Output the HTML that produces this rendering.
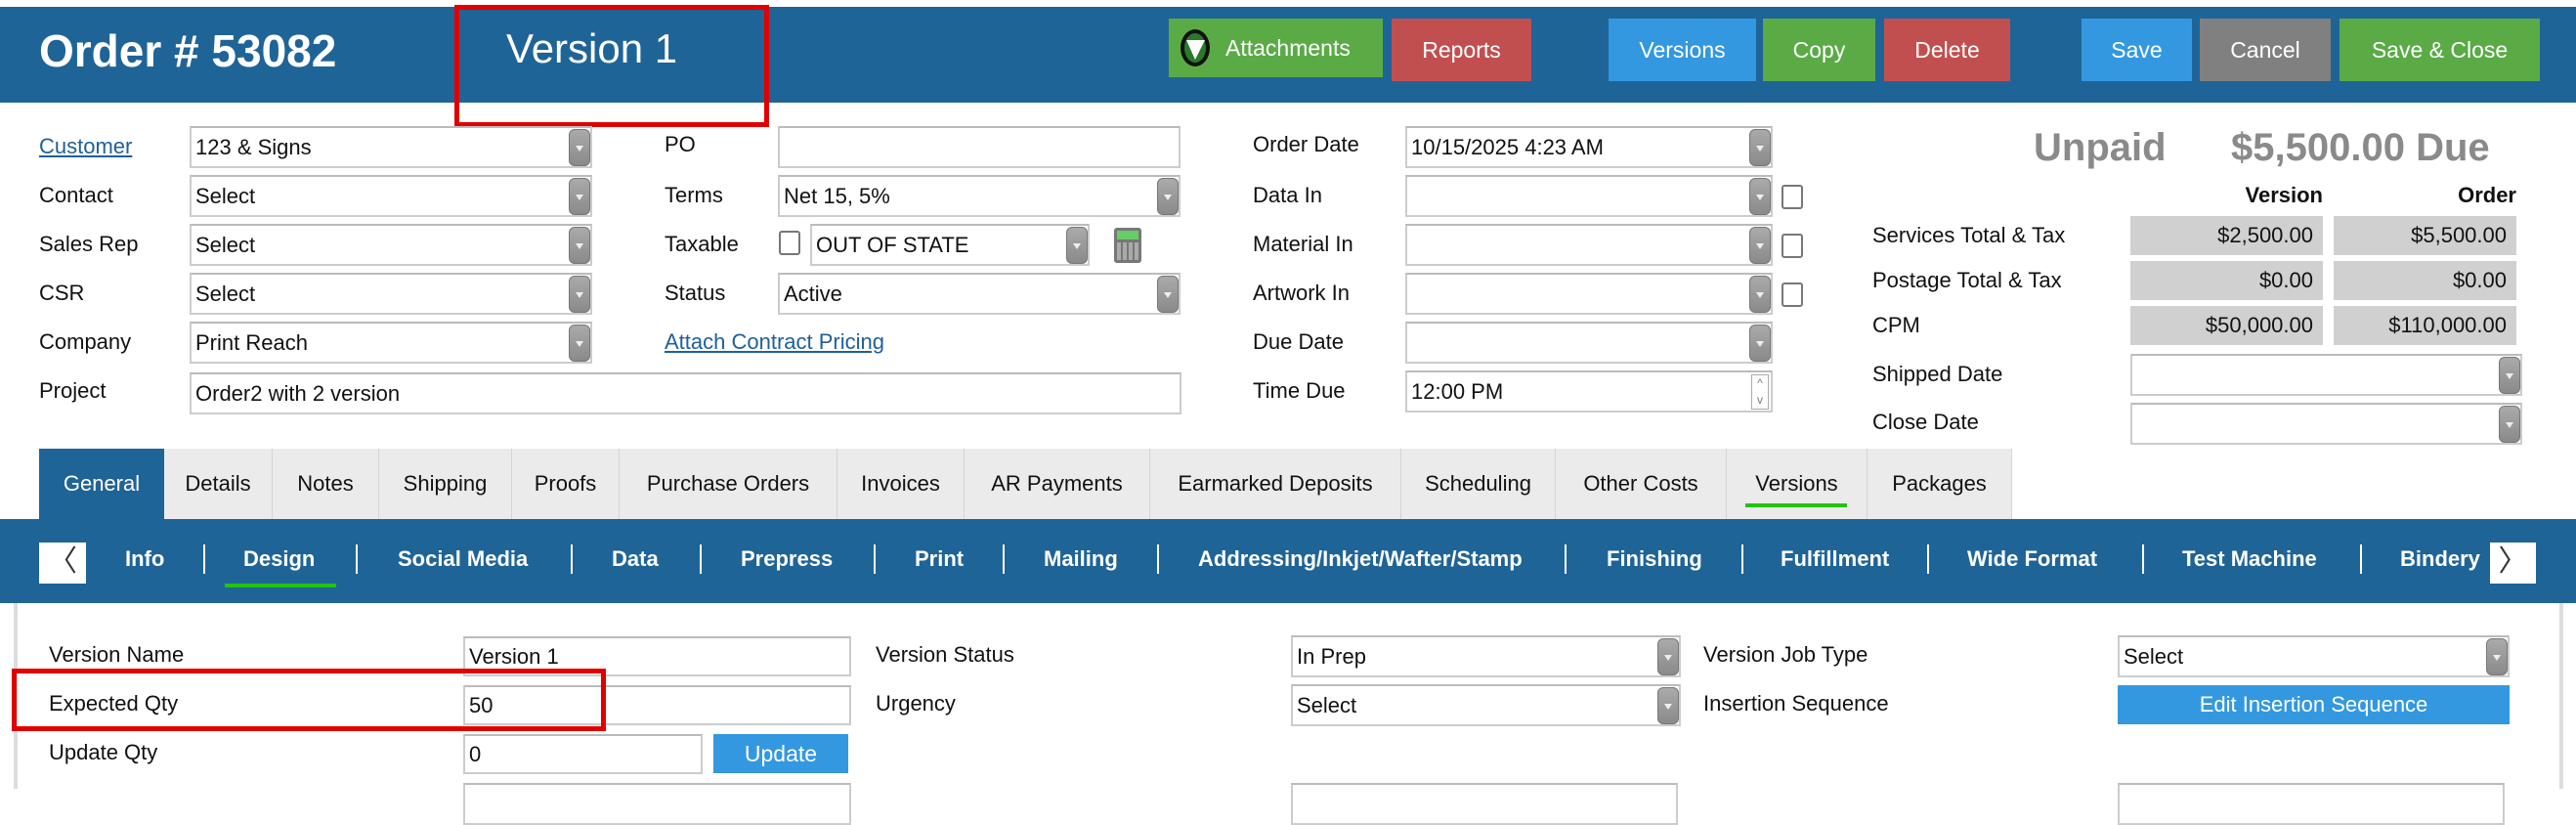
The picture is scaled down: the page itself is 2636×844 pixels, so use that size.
<!DOCTYPE html>
<html><head><meta charset="utf-8"><style>
*{box-sizing:border-box;margin:0;padding:0}
body{width:2636px;height:807px;overflow:hidden;background:#fff;font-family:"Liberation Sans",Arial,sans-serif;font-size:22px;color:#111;position:relative}
.a{position:absolute}
.hdr{left:0;top:7px;width:2636px;height:98px;background:#1f6497}
.btn{position:absolute;top:19px;height:64px;color:#fff;font-size:23px;display:flex;align-items:center;justify-content:center}
.lbl{position:absolute;line-height:26px;white-space:nowrap}
.in{position:absolute;height:43px;border:2px solid #ccc;border-top-color:#bbb;background:#fff;padding-left:4px;line-height:39px;white-space:nowrap;overflow:hidden}
.sel .ar{position:absolute;right:0;top:1px;width:22px;height:38px;background:linear-gradient(#aaa,#8a8a8a);border:1px solid #777;border-radius:6px}
.sel .ar:after{content:"";position:absolute;left:6px;top:16px;border-left:4px solid transparent;border-right:4px solid transparent;border-top:6px solid #eee}
.cb{position:absolute;width:22px;height:25px;border:2px solid #777;border-radius:3px;background:#fff}
.cell{position:absolute;background:#d0d0d0;text-align:right;padding-right:10px;line-height:40px;height:40px}
.tab{position:absolute;top:459px;height:72px;background:#ebebeb;border-right:1px solid #d4d4d4;display:flex;align-items:center;justify-content:center;font-size:22px}
.sub{position:absolute;top:558px;color:#fff;font-size:22px;font-weight:bold;line-height:28px;white-space:nowrap}
.sep{position:absolute;top:557px;width:2px;height:30px;background:#fff}
</style></head><body>
<div class="a hdr"></div>
<div class="lbl" style="left:40px;top:26px;font-size:46px;line-height:52px;font-weight:bold;color:#fff">Order # 53082</div>
<div class="lbl" style="left:518px;top:24px;font-size:42px;line-height:52px;color:#fff">Version 1</div>
<div class="a" style="left:465px;top:5px;width:322px;height:125px;border:5px solid #e00000"></div>

<div class="btn" style="left:1196px;width:219px;height:60px;background:#5aab46;justify-content:flex-start;padding-left:10px"><svg width="34" height="40" viewBox="0 0 34 40"><ellipse cx="17" cy="20" rx="15" ry="19" fill="#111"/><ellipse cx="17" cy="20" rx="11" ry="15" fill="#2a7a2a"/><path d="M8 12 L27 12 L17 32 Z" fill="#fff"/></svg><span style="margin-left:14px">Attachments</span></div>
<div class="btn" style="left:1424px;width:143px;background:#c24f4f">Reports</div>
<div class="btn" style="left:1646px;width:151px;background:#3398e0">Versions</div>
<div class="btn" style="left:1804px;width:115px;background:#5aab46">Copy</div>
<div class="btn" style="left:1928px;width:129px;background:#c24f4f">Delete</div>
<div class="btn" style="left:2130px;width:113px;background:#3398e0">Save</div>
<div class="btn" style="left:2251px;width:134px;background:#808080">Cancel</div>
<div class="btn" style="left:2394px;width:205px;background:#5aab46">Save &amp; Close</div>

<!-- col1 -->
<div class="lbl" style="left:40px;top:137px;color:#1f5f9a;text-decoration:underline">Customer</div>
<div class="lbl" style="left:40px;top:187px">Contact</div>
<div class="lbl" style="left:40px;top:237px">Sales Rep</div>
<div class="lbl" style="left:40px;top:287px">CSR</div>
<div class="lbl" style="left:40px;top:337px">Company</div>
<div class="lbl" style="left:40px;top:387px">Project</div>
<div class="in sel" style="left:194px;top:129px;width:412px">123 &amp; Signs<div class="ar"></div></div>
<div class="in sel" style="left:194px;top:179px;width:412px">Select<div class="ar"></div></div>
<div class="in sel" style="left:194px;top:229px;width:412px">Select<div class="ar"></div></div>
<div class="in sel" style="left:194px;top:279px;width:412px">Select<div class="ar"></div></div>
<div class="in sel" style="left:194px;top:329px;width:412px">Print Reach<div class="ar"></div></div>
<div class="in" style="left:194px;top:381px;width:1015px">Order2 with 2 version</div>
<!-- col2 -->
<div class="lbl" style="left:680px;top:135px">PO</div>
<div class="lbl" style="left:680px;top:187px">Terms</div>
<div class="lbl" style="left:680px;top:237px">Taxable</div>
<div class="lbl" style="left:680px;top:287px">Status</div>
<div class="lbl" style="left:680px;top:337px;color:#1f5f9a;text-decoration:underline">Attach Contract Pricing</div>
<div class="in" style="left:796px;top:129px;width:412px"></div>
<div class="in sel" style="left:796px;top:179px;width:412px">Net 15, 5%<div class="ar"></div></div>
<div class="cb" style="left:797px;top:236px"></div>
<div class="in sel" style="left:829px;top:229px;width:286px">OUT OF STATE<div class="ar"></div></div>
<div class="a" style="left:1140px;top:233px;width:28px;height:36px;background:#777;border-radius:3px"><div class="a" style="left:3px;top:3px;width:22px;height:9px;background:#6c6"></div><div class="a" style="left:3px;top:15px;width:22px;height:18px;background:repeating-linear-gradient(90deg,#aaa 0 4px,#777 4px 6px)"></div></div>
<div class="in sel" style="left:796px;top:279px;width:412px">Active<div class="ar"></div></div>
<!-- col3 -->
<div class="lbl" style="left:1282px;top:135px">Order Date</div>
<div class="lbl" style="left:1282px;top:187px">Data In</div>
<div class="lbl" style="left:1282px;top:237px">Material In</div>
<div class="lbl" style="left:1282px;top:287px">Artwork In</div>
<div class="lbl" style="left:1282px;top:337px">Due Date</div>
<div class="lbl" style="left:1282px;top:387px">Time Due</div>
<div class="in sel" style="left:1438px;top:129px;width:376px">10/15/2025 4:23 AM<div class="ar"></div></div>
<div class="in sel" style="left:1438px;top:179px;width:376px"><div class="ar"></div></div>
<div class="in sel" style="left:1438px;top:229px;width:376px"><div class="ar"></div></div>
<div class="in sel" style="left:1438px;top:279px;width:376px"><div class="ar"></div></div>
<div class="in sel" style="left:1438px;top:329px;width:376px"><div class="ar"></div></div>
<div class="in" style="left:1438px;top:379px;width:376px">12:00 PM<div class="a" style="right:2px;top:2px;width:18px;height:36px;border:1px solid #aaa;font-size:12px;line-height:17px;text-align:center;color:#777">^<br>v</div></div>
<div class="cb" style="left:1823px;top:189px"></div>
<div class="cb" style="left:1823px;top:239px"></div>
<div class="cb" style="left:1823px;top:289px"></div>
<!-- right -->
<div class="lbl" style="left:2081px;top:128px;font-size:40px;line-height:46px;font-weight:bold;color:#8a8a8a">Unpaid</div>
<div class="lbl" style="left:2283px;top:128px;font-size:40px;line-height:46px;font-weight:bold;color:#8a8a8a">$5,500.00 Due</div>
<div class="lbl" style="left:2177px;top:187px;width:200px;text-align:right;font-weight:bold">Version</div>
<div class="lbl" style="left:2375px;top:187px;width:200px;text-align:right;font-weight:bold">Order</div>
<div class="lbl" style="left:1916px;top:228px">Services Total &amp; Tax</div>
<div class="lbl" style="left:1916px;top:274px">Postage Total &amp; Tax</div>
<div class="lbl" style="left:1916px;top:320px">CPM</div>
<div class="lbl" style="left:1916px;top:370px">Shipped Date</div>
<div class="lbl" style="left:1916px;top:419px">Close Date</div>
<div class="cell" style="left:2180px;top:221px;width:197px">$2,500.00</div>
<div class="cell" style="left:2388px;top:221px;width:187px">$5,500.00</div>
<div class="cell" style="left:2180px;top:267px;width:197px">$0.00</div>
<div class="cell" style="left:2388px;top:267px;width:187px">$0.00</div>
<div class="cell" style="left:2180px;top:313px;width:197px">$50,000.00</div>
<div class="cell" style="left:2388px;top:313px;width:187px">$110,000.00</div>
<div class="in sel" style="left:2180px;top:362px;width:401px"><div class="ar"></div></div>
<div class="in sel" style="left:2180px;top:412px;width:401px"><div class="ar"></div></div>

<!-- tabs -->
<div class="tab" style="left:40px;width:128px;background:#1f6497;color:#fff;border:none">General</div>
<div class="tab" style="left:168px;width:111px">Details</div>
<div class="tab" style="left:279px;width:109px">Notes</div>
<div class="tab" style="left:388px;width:136px">Shipping</div>
<div class="tab" style="left:524px;width:110px">Proofs</div>
<div class="tab" style="left:634px;width:223px">Purchase Orders</div>
<div class="tab" style="left:857px;width:130px">Invoices</div>
<div class="tab" style="left:987px;width:190px">AR Payments</div>
<div class="tab" style="left:1177px;width:257px">Earmarked Deposits</div>
<div class="tab" style="left:1434px;width:158px">Scheduling</div>
<div class="tab" style="left:1592px;width:175px">Other Costs</div>
<div class="tab" style="left:1767px;width:144px">Versions</div>
<div class="a" style="left:1786px;top:515px;width:104px;height:4px;background:#22c40c"></div>
<div class="tab" style="left:1911px;width:148px">Packages</div>

<div class="a" style="left:0;top:531px;width:2636px;height:86px;background:#1f6497"></div>
<div class="a" style="left:40px;top:555px;width:48px;height:42px;background:#fff;font-size:30px;line-height:40px;text-align:center;color:#333">&#x2329;</div>
<div class="a" style="left:2548px;top:555px;width:47px;height:42px;background:#fff;font-size:30px;line-height:40px;text-align:center;color:#333">&#x232A;</div>
<div class="sub" style="left:128px">Info</div><div class="sep" style="left:208px"></div>
<div class="sub" style="left:249px">Design</div><div class="sep" style="left:364px"></div>
<div class="a" style="left:230px;top:597px;width:114px;height:4px;background:#22c40c"></div>
<div class="sub" style="left:407px">Social Media</div><div class="sep" style="left:584px"></div>
<div class="sub" style="left:626px">Data</div><div class="sep" style="left:716px"></div>
<div class="sub" style="left:758px">Prepress</div><div class="sep" style="left:894px"></div>
<div class="sub" style="left:936px">Print</div><div class="sep" style="left:1026px"></div>
<div class="sub" style="left:1068px">Mailing</div><div class="sep" style="left:1184px"></div>
<div class="sub" style="left:1226px">Addressing/Inkjet/Wafter/Stamp</div><div class="sep" style="left:1601px"></div>
<div class="sub" style="left:1644px">Finishing</div><div class="sep" style="left:1782px"></div>
<div class="sub" style="left:1822px">Fulfillment</div><div class="sep" style="left:1972px"></div>
<div class="sub" style="left:2013px">Wide Format</div><div class="sep" style="left:2192px"></div>
<div class="sub" style="left:2233px">Test Machine</div><div class="sep" style="left:2415px"></div>
<div class="sub" style="left:2456px">Bindery</div>

<!-- content -->
<div class="a" style="left:14px;top:617px;width:4px;height:190px;background:#ddd"></div>
<div class="a" style="left:2619px;top:617px;width:4px;height:190px;background:#ddd"></div>
<div class="lbl" style="left:50px;top:657px">Version Name</div>
<div class="lbl" style="left:50px;top:707px">Expected Qty</div>
<div class="lbl" style="left:50px;top:757px">Update Qty</div>
<div class="in" style="left:474px;top:651px;width:397px;height:41px;line-height:37px">Version 1</div>
<div class="in" style="left:474px;top:701px;width:397px;height:41px;line-height:37px">50</div>
<div class="in" style="left:474px;top:751px;width:245px;height:41px;line-height:37px">0</div>
<div class="a" style="left:730px;top:751px;width:138px;height:40px;background:#3398e0;color:#fff;text-align:center;line-height:40px;font-size:23px">Update</div>
<div class="in" style="left:474px;top:801px;width:397px"></div>
<div class="a" style="left:12px;top:684px;width:608px;height:64px;border:5px solid #e00000"></div>
<div class="lbl" style="left:896px;top:657px">Version Status</div>
<div class="lbl" style="left:896px;top:707px">Urgency</div>
<div class="in sel" style="left:1321px;top:650px;width:399px">In Prep<div class="ar"></div></div>
<div class="in sel" style="left:1321px;top:700px;width:399px">Select<div class="ar"></div></div>
<div class="in" style="left:1321px;top:801px;width:396px"></div>
<div class="lbl" style="left:1743px;top:657px">Version Job Type</div>
<div class="lbl" style="left:1743px;top:707px">Insertion Sequence</div>
<div class="in sel" style="left:2167px;top:650px;width:401px">Select<div class="ar"></div></div>
<div class="a" style="left:2167px;top:701px;width:401px;height:40px;background:#3398e0;color:#fff;text-align:center;line-height:40px;font-size:22px">Edit Insertion Sequence</div>
<div class="in" style="left:2167px;top:801px;width:396px"></div>
</body></html>
